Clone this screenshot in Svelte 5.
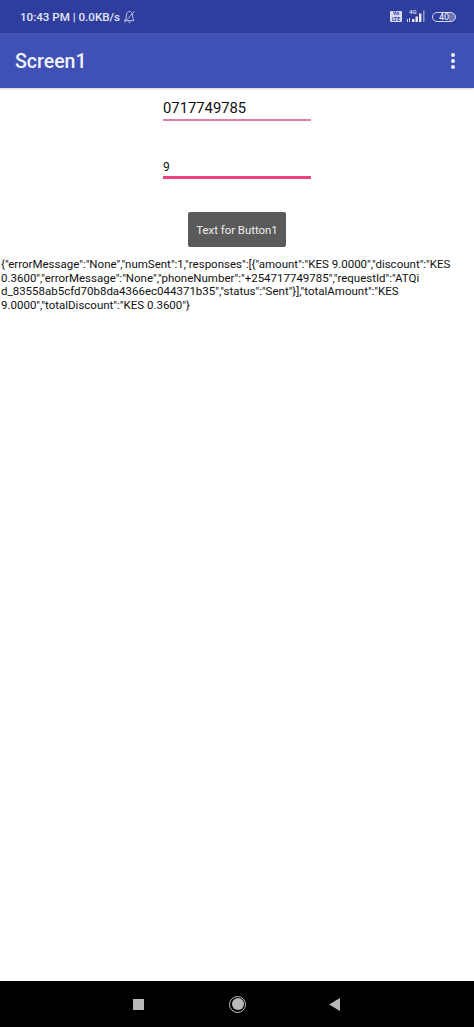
<script>
    let phone = "0717749785";
    let amount = "9";
    const lines = [
        '{"errorMessage":"None","numSent":1,"responses":[{"amount":"KES 9.0000","discount":"KES',
        '0.3600","errorMessage":"None","phoneNumber":"+254717749785","requestId":"ATQi',
        'd_83558ab5cfd70b8da4366ec044371b35","status":"Sent"}],"totalAmount":"KES',
        '9.0000","totalDiscount":"KES 0.3600"}'
    ];
</script>

<div class="screen">
    <div class="status">
        <span class="clock">10:43 PM | 0.0KB/s</span>
        <svg class="bell" width="13" height="14" viewBox="0 0 13 14">
            <path d="M6.5 1.5C4.4 1.5 3.6 3.2 3.4 5.2L2.9 8.6L1.4 10.6H11L9.9 8.4L9.5 4.8C9.2 2.8 8.2 1.5 6.5 1.5ZM5.3 12.2H7.7M1.6 12.4L11.4 1.2" fill="none" stroke="#c8cde8" stroke-width="0.9"/>
        </svg>
        <div class="right">
            <div class="volte">Vo<br />LTE</div>
            <div class="signal">
                <span class="g4">4G</span>
                <svg width="21" height="13" viewBox="0 0 21 13">
                    <path d="M1 9H2V12H1ZM3 8H4V12H3Z" fill="#cfd3ec"/>
                    <rect x="6" y="9" width="2.4" height="3" fill="#e8eaf6"/>
                    <rect x="9.5" y="6.5" width="2.4" height="5.5" fill="#e8eaf6"/>
                    <rect x="13" y="3.5" width="2.4" height="8.5" fill="#e8eaf6"/>
                    <rect x="17" y="0.5" width="1.5" height="11.5" fill="#8f97cc"/>
                </svg>
            </div>
            <div class="battery">40</div>
        </div>
    </div>

    <div class="toolbar">
        <span class="title">Screen1</span>
        <div class="menu"><i></i><i></i><i></i></div>
    </div>

    <div class="content">
        <div class="field first">{phone}</div>
        <div class="field second">{amount}</div>
        <div class="button">Text for Button1</div>
        <div class="response">
            {#each lines as line}
                <div>{line}</div>
            {/each}
        </div>
    </div>

    <div class="navbar">
        <span class="square"></span>
        <span class="home"><span></span></span>
        <svg width="13" height="15" viewBox="0 0 13 15"><path d="M12 1V14L1 7.5Z" fill="#b9b9b9"/></svg>
    </div>
</div>

<style>
    :global(body) {
        margin: 0;
        background: #fff;
    }

    .screen {
        width: 474px;
        height: 1027px;
        display: flex;
        flex-direction: column;
        overflow: hidden;
        font-family: Roboto, sans-serif;
    }

    .status {
        height: 33px;
        flex: none;
        background: #2f3e9e;
        display: flex;
        align-items: center;
        padding: 0 18px 0 20px;
        color: #e4e6f5;
        box-sizing: border-box;
    }

    .clock {
        font-size: 11.6px;
        font-weight: 500;
    }

    .bell {
        margin-left: 3px;
    }

    .right {
        margin-left: auto;
        display: flex;
        align-items: center;
    }

    .volte {
        width: 12px;
        height: 11px;
        margin-right: 4px;
        background: #d5d8ee;
        border-radius: 1px;
        color: #2f3e9e;
        font-size: 5px;
        font-weight: 700;
        line-height: 5.5px;
        text-align: center;
    }

    .signal {
        position: relative;
        margin-right: 5px;
        display: flex;
    }

    .g4 {
        position: absolute;
        left: 3px;
        top: -2px;
        font-size: 6px;
        font-weight: 500;
    }

    .battery {
        width: 22px;
        height: 8px;
        line-height: 8px;
        border: 1px solid #d5d8ee;
        border-radius: 6px;
        font-size: 9px;
        font-weight: 500;
        text-align: center;
        background: linear-gradient(90deg, transparent 72%, #6d78bd 72%);
    }

    .toolbar {
        height: 55px;
        flex: none;
        background: #3f51b5;
        display: flex;
        align-items: center;
        justify-content: space-between;
        padding: 0 19px 0 15px;
        box-sizing: border-box;
        color: #f0f1fa;
        box-shadow: 0 1px 2px rgba(0, 0, 0, 0.2);
    }

    .title {
        padding-top: 2px;
        font-size: 19.5px;
        font-weight: 500;
    }

    .menu {
        display: flex;
        flex-direction: column;
        gap: 2px;
    }

    .menu i {
        display: block;
        width: 4px;
        height: 4px;
        border-radius: 50%;
        background: #f0f1fa;
    }

    .content {
        flex: 1;
        display: flex;
        flex-direction: column;
        align-items: center;
        color: #111;
    }

    .field {
        width: 148px;
        box-sizing: border-box;
        border-bottom: 2px solid #e7538a;
    }

    .first {
        margin-top: 9px;
        height: 24px;
        font-size: 14.8px;
        line-height: 23px;
        border-bottom-color: #e77ca4;
    }

    .second {
        margin-top: 35px;
        height: 23px;
        font-size: 12px;
        line-height: 23px;
        border-bottom-width: 3px;
        border-bottom-color: #e8447f;
    }

    .button {
        margin-top: 33px;
        width: 98px;
        height: 35px;
        line-height: 36px;
        background: #5a5a5a;
        color: #efefef;
        border-radius: 2px;
        font-size: 11.4px;
        text-align: center;
    }

    .response {
        align-self: stretch;
        margin-top: 11px;
        padding-left: 1px;
        font-size: 11.5px;
        line-height: 13.6px;
        white-space: nowrap;
    }

    .navbar {
        height: 46px;
        flex: none;
        background: #000;
        display: flex;
        align-items: center;
        justify-content: space-between;
        padding: 0 133px;
        box-sizing: border-box;
    }

    .square {
        width: 11px;
        height: 11px;
        background: #b9b9b9;
    }

    .home {
        width: 15px;
        height: 15px;
        margin-left: 3px;
        border: 1px solid #c4c4c4;
        border-radius: 50%;
        display: grid;
        place-items: center;
    }

    .home span {
        width: 12px;
        height: 12px;
        border-radius: 50%;
        background: #b9b9b9;
    }
</style>
